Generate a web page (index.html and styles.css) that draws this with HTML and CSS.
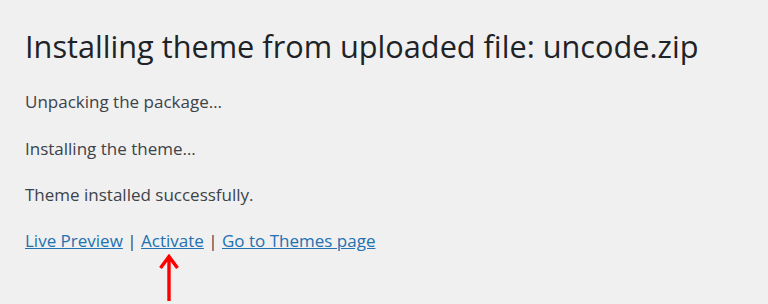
FILE: index.html
```html
<!DOCTYPE html>
<html lang="en">
<head>
<meta charset="UTF-8">
<title>Install Themes</title>
<link rel="stylesheet" href="styles.css">
</head>
<body>
<div class="wrap">
    <h1>Installing theme from uploaded file: uncode.zip</h1>
    <p>Unpacking the package&hellip;</p>
    <p>Installing the theme&hellip;</p>
    <p>Theme installed successfully.</p>
    <p class="actions">
        <a href="#">Live Preview</a> | <span class="pointer"><a href="#">Activate</a><svg class="arrow" viewBox="0 0 20 47"><path d="M10 2 V47 M1.5 14 L10 2.5 L18.5 14" fill="none" stroke="#f00" stroke-width="3.4"/></svg></span> | <a href="#">Go to Themes page</a>
    </p>
</div>
</body>
</html>
```
FILE: styles.css
```css
html, body {
    min-height: 100vh;
}
body {
    margin: 0;
    background-color: #f0f0f0;
    font-family: "Open Sans", sans-serif;
    color: #3c434a;
}
.wrap {
    padding: 24px 25px 0;
    min-height: 304px;
    box-sizing: border-box;
}
h1 {
    margin: 0 0 21.4px;
    font-size: 30.7px;
    font-weight: 400;
    line-height: 44px;
    color: #1d2327;
}
p {
    margin: 0 0 21.3px;
    font-size: 17px;
    line-height: 25px;
}
a {
    color: #2271b1;
}
.pointer {
    position: relative;
}
.arrow {
    position: absolute;
    display: block;
    left: 50%;
    top: 25px;
    width: 20px;
    height: 47px;
    margin-left: -13px;
}
```
